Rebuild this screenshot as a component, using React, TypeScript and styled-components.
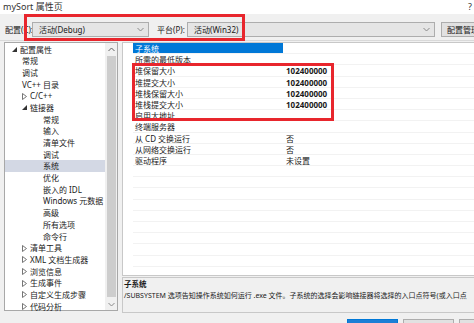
import React from 'react';
import styled, { createGlobalStyle } from 'styled-components';

const GlobalStyle = createGlobalStyle`
    html, body {
        margin: 0;
        padding: 0;
    }
    body {
        background: #f0f0f0;
        font-family: "Noto Sans", "Noto Sans CJK SC", sans-serif;
    }
`;

const Dialog = styled.div`
    position: relative;
    width: 474px;
    height: 323px;
    overflow: hidden;
    background: #f0f0f0;
    display: flex;
    flex-direction: column;
    font-size: 8px;
    color: #1a1a1a;
`;

const TitleBar = styled.div`
    height: 14px;
    flex: none;
    background: #fff;
    padding: 0 2px 0 3px;
    display: flex;
    justify-content: space-between;
    font-size: 9px;
    line-height: 14px;
    color: #333;
`;

const Toolbar = styled.div`
    height: 27px;
    flex: none;
    box-sizing: border-box;
    padding: 8px 0 0 5px;
    display: flex;
    align-items: flex-start;
    border-bottom: 1px solid #d9d9d9;
    white-space: nowrap;
`;

const Label = styled.span<{ $w: number; $gap?: number }>`
    width: ${(p) => p.$w}px;
    margin-left: ${(p) => p.$gap ?? 0}px;
    flex: none;
    line-height: 15px;
`;

const Combo = styled.div<{ $w: number }>`
    width: ${(p) => p.$w}px;
    height: 15px;
    flex: none;
    box-sizing: border-box;
    border: 1px solid #adadad;
    background: #e5e5e5;
    padding: 0 4px 0 6px;
    display: flex;
    align-items: center;
    justify-content: space-between;
    line-height: 13px;
`;

const ToolButton = styled.div`
    margin-left: 6px;
    width: 60px;
    height: 15px;
    flex: none;
    box-sizing: border-box;
    border: 1px solid #adadad;
    background: #e1e1e1;
    padding-left: 5px;
    line-height: 13px;
    overflow: hidden;
`;

const Body = styled.div`
    margin-top: 1px;
    height: 270px;
    flex: none;
    display: flex;
    gap: 4px;
    padding-left: 4px;
`;

const TreePanel = styled.div`
    width: 114px;
    height: 269px;
    flex: none;
    box-sizing: border-box;
    border: 1px solid #a8a8a8;
    background: #fff;
    display: flex;
`;

const TreeList = styled.div`
    flex: 1;
    padding-top: 0.5px;
`;

const TreeRow = styled.div<{ $level: number; $selected?: boolean }>`
    height: 11.7px;
    line-height: 11.7px;
    display: flex;
    align-items: center;
    padding-left: ${(p) => [7, 17, 38][p.$level]}px;
    background: ${(p) => (p.$selected ? '#d3d8e4' : 'transparent')};
    white-space: nowrap;
`;

const Arrow = styled.span`
    width: 8px;
    flex: none;
    display: flex;
    align-items: center;
`;

const ScrollBar = styled.div`
    width: 12px;
    flex: none;
    background: #f0f0f0;
    display: flex;
    flex-direction: column;
    align-items: center;
`;

const ScrollArrow = styled.div`
    height: 12px;
    flex: none;
    display: flex;
    align-items: center;
    justify-content: center;
`;

const ScrollThumb = styled.div`
    width: 9px;
    flex: 1;
    margin: 1px 0;
    background: #cdcdcd;
`;

const RightColumn = styled.div`
    width: 360px;
    flex: none;
    display: flex;
    flex-direction: column;
    gap: 1px;
`;

const Grid = styled.div`
    height: 234px;
    flex: none;
    box-sizing: border-box;
    border: 1px solid #c8c8c8;
    border-right: none;
    background: #fff;
`;

const PropRow = styled.div`
    height: 11.2px;
    display: grid;
    grid-template-columns: 10px 150px 1fr;
    line-height: 11.2px;
    white-space: nowrap;
`;

const NameCell = styled.div<{ $active?: boolean }>`
    padding-left: 2px;
    background: ${(p) => (p.$active ? '#0078d7' : 'transparent')};
    color: ${(p) => (p.$active ? '#fff' : 'inherit')};
    box-shadow: inset 0 -1px 0 #f2f2f2;
`;

const ValueCell = styled.div<{ $bold?: boolean }>`
    padding-left: 3px;
    font-weight: ${(p) => (p.$bold ? 700 : 400)};
    box-shadow: inset 0 -1px 0 #f2f2f2;
`;

const Description = styled.div`
    height: 36px;
    flex: none;
    box-sizing: border-box;
    border: 1px solid #c8c8c8;
    border-right: none;
    background: #f0f0f0;
    padding: 1px 0 0 1px;
    font-size: 7px;
    line-height: 11px;
    white-space: nowrap;
    overflow: hidden;
`;

const DescTitle = styled.div`
    font-size: 7.5px;
    font-weight: 700;
`;

const Footer = styled.div`
    flex: none;
    display: flex;
    gap: 5px;
    padding: 7px 0 0 347px;
`;

const DialogButton = styled.div<{ $primary?: boolean }>`
    width: 51px;
    height: 16px;
    flex: none;
    box-sizing: border-box;
    border: 1px solid ${(p) => (p.$primary ? '#0078d7' : '#adadad')};
    background: ${(p) => (p.$primary ? '#1d7fd6' : '#e1e1e1')};
`;

const RedBox = styled.div<{ $x: number; $y: number; $w: number; $h: number }>`
    position: absolute;
    left: ${(p) => p.$x}px;
    top: ${(p) => p.$y}px;
    width: ${(p) => p.$w}px;
    height: ${(p) => p.$h}px;
    box-sizing: border-box;
    border: 3px solid #e8262d;
    pointer-events: none;
`;

function Chevron({ up = false }: { up?: boolean }) {
    return (
        <svg width="7" height="5" viewBox="0 0 7 5">
            <path
                d={up ? 'M0.5 4 L3.5 1 L6.5 4' : 'M0.5 1 L3.5 4 L6.5 1'}
                fill="none"
                stroke={up ? '#606060' : '#8a8a8a'}
                strokeWidth="1"
            />
        </svg>
    );
}

function TreeArrow({ open }: { open: boolean }) {
    return open ? (
        <svg width="5" height="5" viewBox="0 0 5 5">
            <path d="M5 0 L5 5 L0 5 Z" fill="#333" />
        </svg>
    ) : (
        <svg width="5" height="7" viewBox="0 0 5 7">
            <path d="M0.5 0.5 L4.5 3.5 L0.5 6.5 Z" fill="none" stroke="#666" strokeWidth="0.9" />
        </svg>
    );
}

type TreeItem = { label: string; level: number; arrow?: 'open' | 'closed'; selected?: boolean };

const treeItems: TreeItem[] = [
    { label: '配置属性', level: 0, arrow: 'open' },
    { label: '常规', level: 1 },
    { label: '调试', level: 1 },
    { label: 'VC++ 目录', level: 1 },
    { label: 'C/C++', level: 1, arrow: 'closed' },
    { label: '链接器', level: 1, arrow: 'open' },
    { label: '常规', level: 2 },
    { label: '输入', level: 2 },
    { label: '清单文件', level: 2 },
    { label: '调试', level: 2 },
    { label: '系统', level: 2, selected: true },
    { label: '优化', level: 2 },
    { label: '嵌入的 IDL', level: 2 },
    { label: 'Windows 元数据', level: 2 },
    { label: '高级', level: 2 },
    { label: '所有选项', level: 2 },
    { label: '命令行', level: 2 },
    { label: '清单工具', level: 1, arrow: 'closed' },
    { label: 'XML 文档生成器', level: 1, arrow: 'closed' },
    { label: '浏览信息', level: 1, arrow: 'closed' },
    { label: '生成事件', level: 1, arrow: 'closed' },
    { label: '自定义生成步骤', level: 1, arrow: 'closed' },
    { label: '代码分析', level: 1, arrow: 'closed' },
];

type Prop = { name: string; value?: string; bold?: boolean; active?: boolean };

const props: Prop[] = [
    { name: '子系统', active: true },
    { name: '所需的最低版本' },
    { name: '堆保留大小', value: '102400000', bold: true },
    { name: '堆提交大小', value: '102400000', bold: true },
    { name: '堆栈保留大小', value: '102400000', bold: true },
    { name: '堆栈提交大小', value: '102400000', bold: true },
    { name: '启用大地址' },
    { name: '终端服务器' },
    { name: '从 CD 交换运行', value: '否' },
    { name: '从网络交换运行', value: '否' },
    { name: '驱动程序', value: '未设置' },
    ...Array.from({ length: 9 }, () => ({ name: '' })),
];

function App(): JSX.Element {
    return (
        <>
            <GlobalStyle />
            <Dialog>
                <TitleBar>
                    <span>mySort 属性页</span>
                    <span>?</span>
                </TitleBar>
                <Toolbar>
                    <Label $w={27}>配置(C):</Label>
                    <Combo $w={117}>
                        <span>活动(Debug)</span>
                        <Chevron />
                    </Combo>
                    <Label $w={30} $gap={8}>
                        平台(P):
                    </Label>
                    <Combo $w={248}>
                        <span>活动(Win32)</span>
                        <Chevron />
                    </Combo>
                    <ToolButton>配置管理器</ToolButton>
                </Toolbar>
                <Body>
                    <TreePanel>
                        <TreeList>
                            {treeItems.map((item, i) => (
                                <TreeRow key={i} $level={item.level} $selected={item.selected}>
                                    {item.arrow && (
                                        <Arrow>
                                            <TreeArrow open={item.arrow === 'open'} />
                                        </Arrow>
                                    )}
                                    <span>{item.label}</span>
                                </TreeRow>
                            ))}
                        </TreeList>
                        <ScrollBar>
                            <ScrollArrow>
                                <Chevron up />
                            </ScrollArrow>
                            <ScrollThumb />
                            <ScrollArrow>
                                <Chevron />
                            </ScrollArrow>
                        </ScrollBar>
                    </TreePanel>
                    <RightColumn>
                        <Grid>
                            {props.map((p, i) => (
                                <PropRow key={i}>
                                    <div />
                                    <NameCell $active={p.active}>{p.name}</NameCell>
                                    <ValueCell $bold={p.bold}>{p.value}</ValueCell>
                                </PropRow>
                            ))}
                        </Grid>
                        <Description>
                            <DescTitle>子系统</DescTitle>
                            <div>
                                /SUBSYSTEM 选项告知操作系统如何运行 .exe 文件。子系统的选择会影响链接器将选择的入口点符号(或入口点
                            </div>
                        </Description>
                    </RightColumn>
                </Body>
                <Footer>
                    <DialogButton $primary />
                    <DialogButton />
                    <DialogButton />
                </Footer>
                <RedBox $x={24} $y={14} $w={221} $h={27} />
                <RedBox $x={132} $y={63} $w={202} $h={58} />
            </Dialog>
        </>
    );
}

export default App;
